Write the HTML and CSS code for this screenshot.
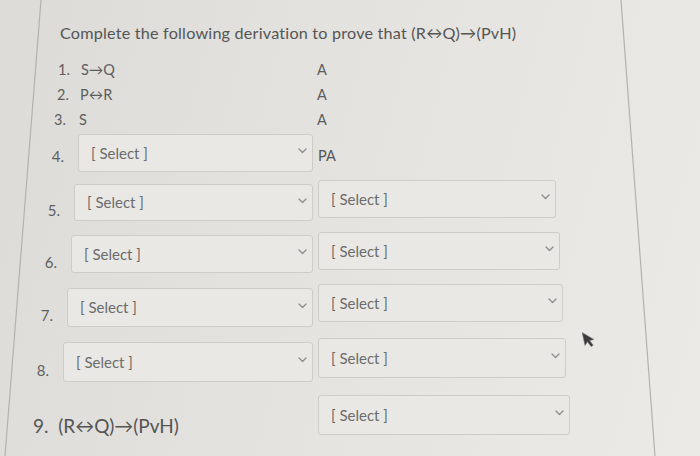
FILE: index.html
```html
<!DOCTYPE html>
<html lang="en">
<head>
<meta charset="utf-8">
<title>Derivation</title>
<link rel="stylesheet" href="styles.css">
</head>
<body>
<div class="sheet">
  <svg class="edges" width="700" height="456" viewBox="0 0 700 456" aria-hidden="true">
    <line x1="41" y1="0" x2="5" y2="456"/>
    <line x1="621" y1="0" x2="655" y2="456"/>
  </svg>

  <p class="title">Complete the following derivation to prove that (R↔Q)→(PvH)</p>

  <ol class="premises">
    <li class="p1"><span class="pnum">1.</span><span class="formula">S→Q</span><span class="just">A</span></li>
    <li class="p2"><span class="pnum">2.</span><span class="formula">P↔R</span><span class="just">A</span></li>
    <li class="p3"><span class="pnum">3.</span><span class="formula">S</span><span class="just">A</span></li>
  </ol>

  <div class="steps">
    <div class="step s4">
      <span class="num">4.</span>
      <div class="select left"><span>[ Select ]</span><svg class="chev" width="9" height="6" viewBox="0 0 9 6"><path d="M1 1 L4.5 4.5 L8 1"/></svg></div>
      <span class="rule">PA</span>
    </div>
    <div class="step s5">
      <span class="num">5.</span>
      <div class="select left"><span>[ Select ]</span><svg class="chev" width="9" height="6" viewBox="0 0 9 6"><path d="M1 1 L4.5 4.5 L8 1"/></svg></div>
      <div class="select right"><span>[ Select ]</span><svg class="chev" width="9" height="6" viewBox="0 0 9 6"><path d="M1 1 L4.5 4.5 L8 1"/></svg></div>
    </div>
    <div class="step s6">
      <span class="num">6.</span>
      <div class="select left"><span>[ Select ]</span><svg class="chev" width="9" height="6" viewBox="0 0 9 6"><path d="M1 1 L4.5 4.5 L8 1"/></svg></div>
      <div class="select right"><span>[ Select ]</span><svg class="chev" width="9" height="6" viewBox="0 0 9 6"><path d="M1 1 L4.5 4.5 L8 1"/></svg></div>
    </div>
    <div class="step s7">
      <span class="num">7.</span>
      <div class="select left"><span>[ Select ]</span><svg class="chev" width="9" height="6" viewBox="0 0 9 6"><path d="M1 1 L4.5 4.5 L8 1"/></svg></div>
      <div class="select right"><span>[ Select ]</span><svg class="chev" width="9" height="6" viewBox="0 0 9 6"><path d="M1 1 L4.5 4.5 L8 1"/></svg></div>
    </div>
    <div class="step s8">
      <span class="num">8.</span>
      <div class="select left"><span>[ Select ]</span><svg class="chev" width="9" height="6" viewBox="0 0 9 6"><path d="M1 1 L4.5 4.5 L8 1"/></svg></div>
      <div class="select right"><span>[ Select ]</span><svg class="chev" width="9" height="6" viewBox="0 0 9 6"><path d="M1 1 L4.5 4.5 L8 1"/></svg></div>
    </div>
    <div class="step s9">
      <span class="conclusion">9.&nbsp; (R↔Q)→(PvH)</span>
      <div class="select right"><span>[ Select ]</span><svg class="chev" width="9" height="6" viewBox="0 0 9 6"><path d="M1 1 L4.5 4.5 L8 1"/></svg></div>
    </div>
  </div>

  <svg class="cursor" width="16" height="20" viewBox="0 0 16 20" aria-hidden="true">
    <path d="M1 1 L1 14 L4.2 11 L6.8 16.5 L9 15.5 L6.5 10.2 L10.8 10 Z"/>
  </svg>
</div>
</body>
</html>
```

FILE: styles.css
```css
* { box-sizing: border-box; }

html, body {
  margin: 0;
  padding: 0;
}

body {
  width: 700px;
  height: 456px;
  overflow: hidden;
  font-family: Lato, "Open Sans", "DejaVu Sans", sans-serif;
  color: #5a5a5a;
  background: linear-gradient(105deg, #dcdbd8 0%, #e2e1de 35%, #e7e6e3 70%, #ebeae7 100%);
}

.sheet {
  position: relative;
  width: 700px;
  height: 456px;
  padding-top: 23px;
}

.edges {
  position: absolute;
  left: 0;
  top: 0;
  pointer-events: none;
}
.edges line {
  stroke: #b3b2af;
  stroke-width: 1.2;
}

.title {
  margin: 0 0 0 60px;
  font-size: 16.2px;
  line-height: 20px;
  color: #555;
  letter-spacing: 0.2px;
  white-space: nowrap;
}

.premises {
  list-style: none;
  margin: 14px 0 0 0;
  padding: 0;
  font-size: 14.5px;
  color: #5d5d5d;
}
.premises li {
  display: grid;
  grid-template-columns: 23px auto;
  height: 25px;
  line-height: 25px;
  position: relative;
}
.premises .p1 { padding-left: 58px; }
.premises .p2 { padding-left: 57px; }
.premises .p3 { padding-left: 54px; height: 24px; }
.premises .p3 .formula { padding-left: 2px; }
.just {
  position: absolute;
  left: 317px;
  top: 0;
}

.steps {
  margin-top: 3px;
  display: flex;
  flex-direction: column;
}

.step {
  display: flex;
  align-items: flex-start;
}

.num {
  width: var(--x);
  text-align: right;
  padding-right: 14px;
  font-size: 15px;
  color: #5f5f5f;
  line-height: 20px;
  padding-top: var(--ny);
}

.select {
  display: flex;
  align-items: center;
  justify-content: space-between;
  border: 1px solid #cdccc9;
  border-radius: 3px;
  background: #e9e8e5;
  padding: 0 5px 1px 12px;
  font-size: 15px;
  color: #6c6c6c;
}
.select.left {
  width: calc(313px - var(--x));
  height: var(--lh);
  margin-top: var(--lt);
}
.select.right {
  width: var(--rw);
  height: var(--rh);
  margin-left: 5px;
}
.chev {
  flex: none;
  margin-top: -3px;
}
.chev path {
  fill: none;
  stroke: #8c8c8c;
  stroke-width: 1.3;
  stroke-linecap: round;
  stroke-linejoin: round;
}

.rule {
  margin-left: 5px;
  font-size: 14.5px;
  color: #555;
  line-height: 20px;
  padding-top: 12px;
}

.s4 { --x: 78px; --ny: 12px; --lh: 38px; --lt: 0px; }
.s5 { --x: 74px; --ny: 20px; --lh: 37px; --lt: 4px; --rw: 238px; --rh: 38px; margin-top: 8px; }
.s6 { --x: 71px; --ny: 20px; --lh: 38px; --lt: 3px; --rw: 242px; --rh: 38px; margin-top: 11px; }
.s7 { --x: 67px; --ny: 21px; --lh: 39px; --lt: 4px; --rw: 245px; --rh: 38px; margin-top: 11px; }
.s8 { --x: 63px; --ny: 22px; --lh: 40px; --lt: 4px; --rw: 248px; --rh: 40px; margin-top: 11px; }
.s9 { --rw: 252px; --rh: 40px; margin-top: 13px; }

.conclusion {
  width: 313px;
  padding-left: 33px;
  font-size: 19px;
  color: #555;
  line-height: 20px;
  padding-top: 21px;
}

.cursor {
  position: absolute;
  left: 583px;
  top: 330px;
  transform: rotate(-12deg);
}
.cursor path {
  fill: #3b3b3b;
  stroke: #6a6a6a;
  stroke-width: 0.6;
}
```
